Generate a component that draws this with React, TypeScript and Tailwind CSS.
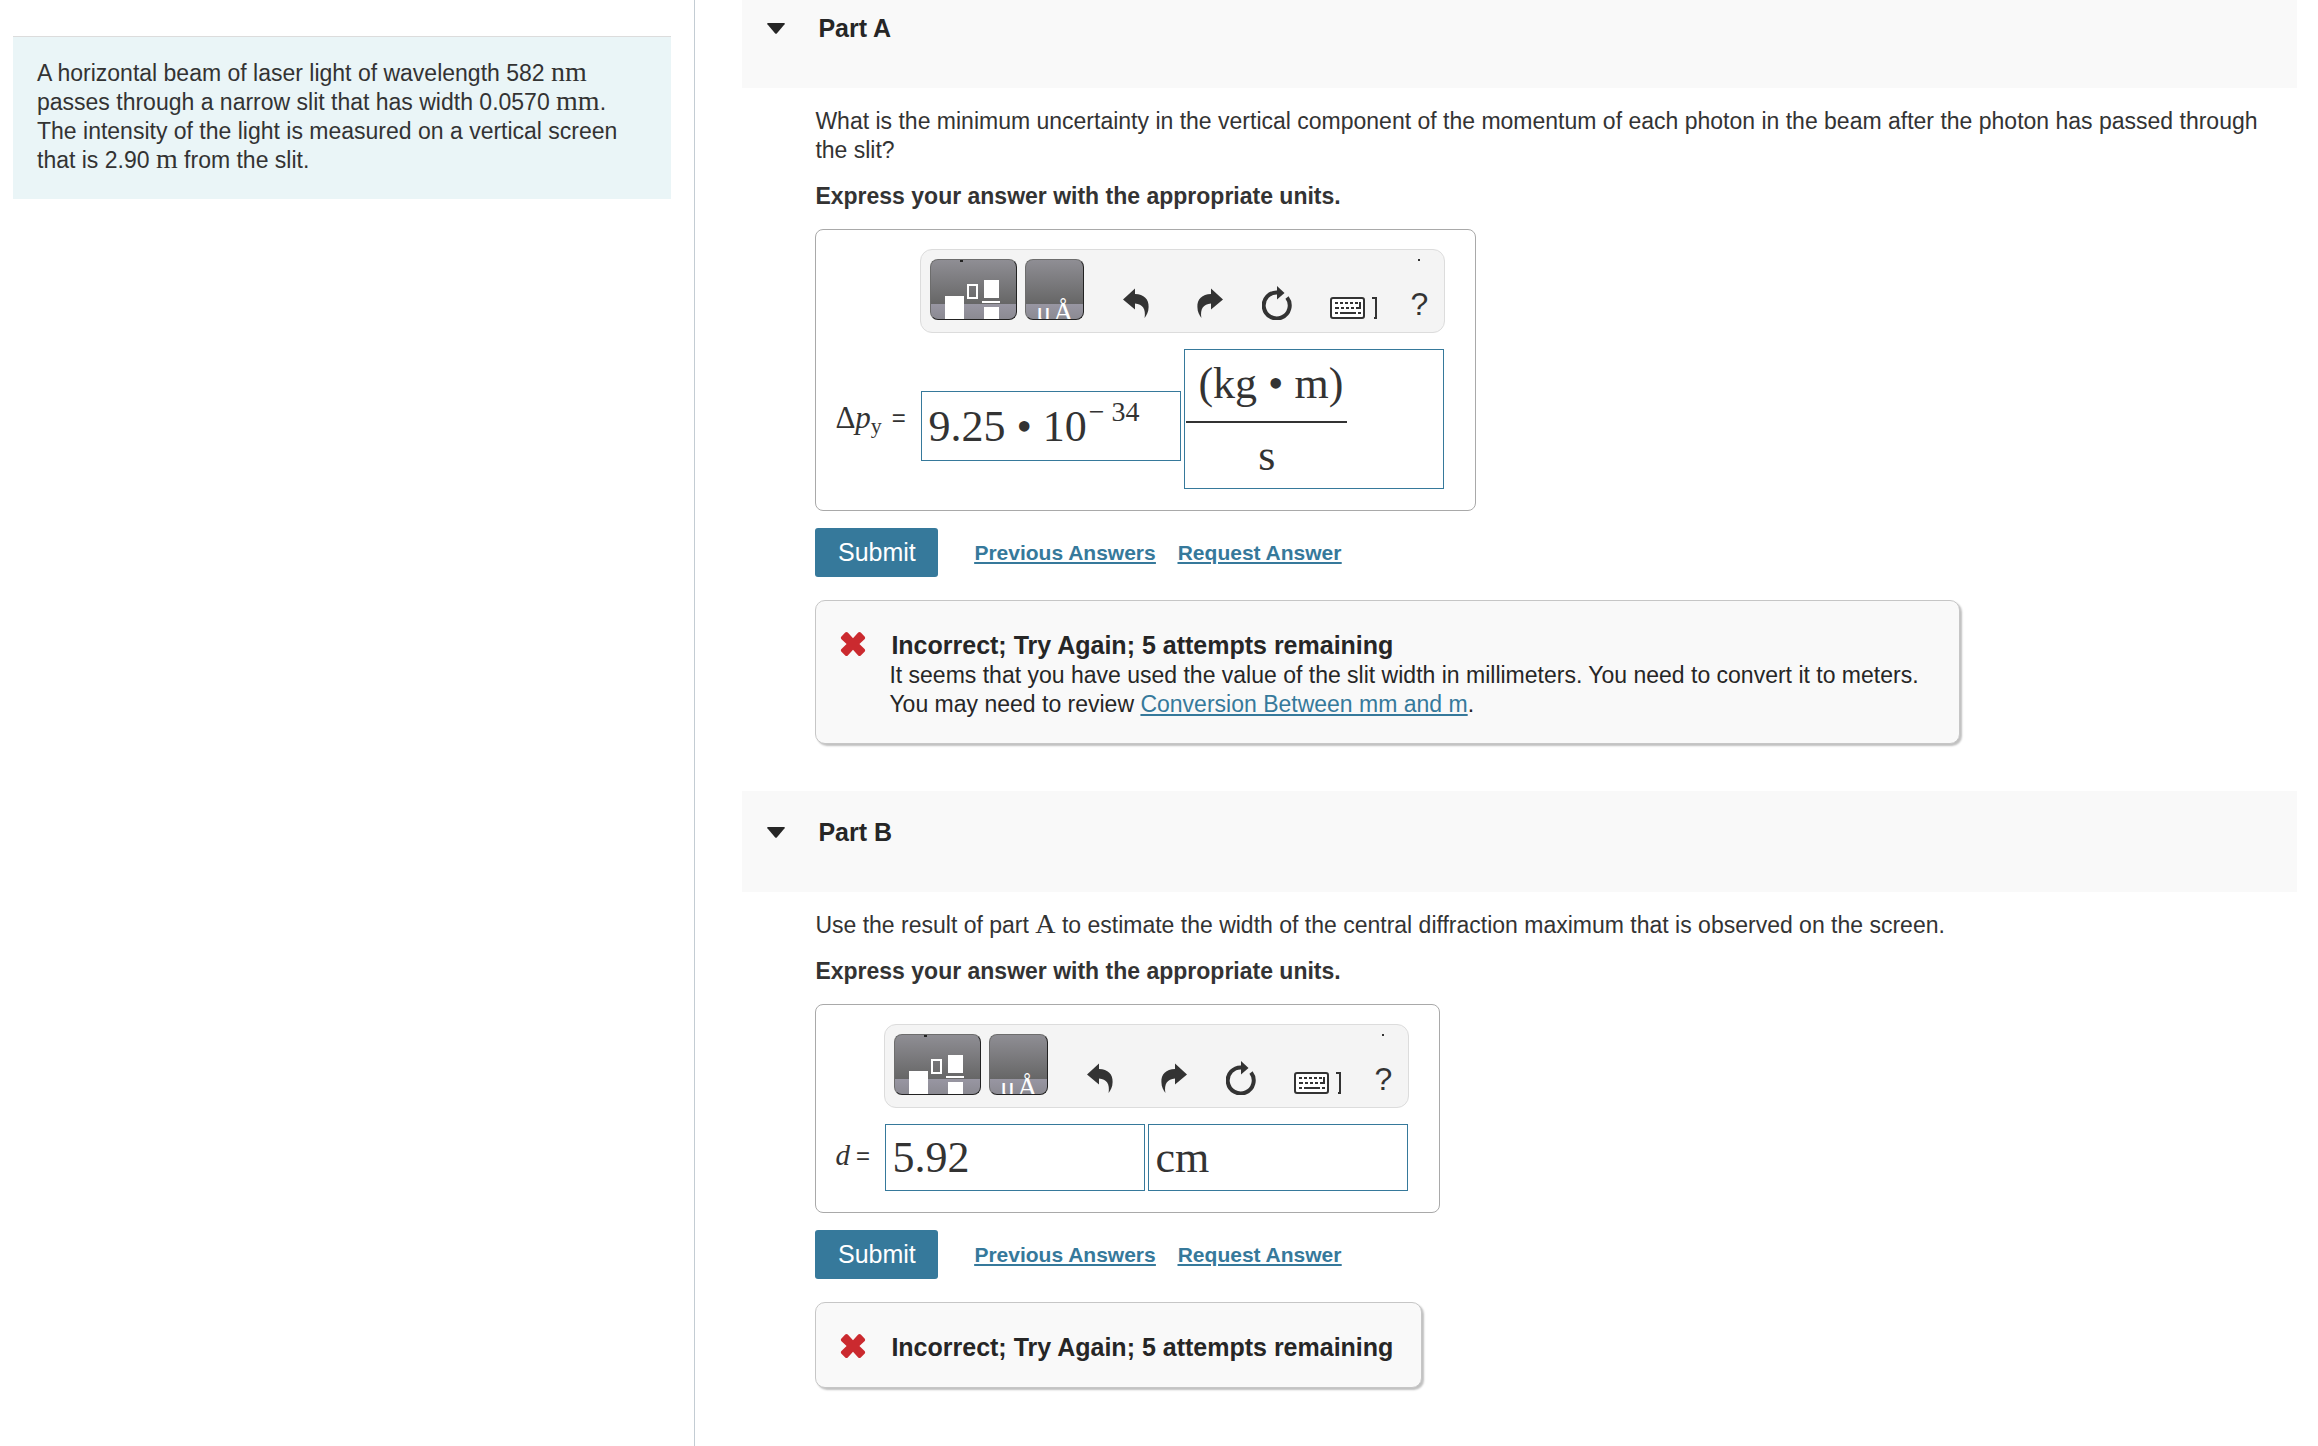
import React from "react";

type PartHeaderProps = {
  title: string;
  className: string;
};

const PartHeader = ({ title, className }: PartHeaderProps) => {
  return (
    <header className={`bg-[#f9f9f9] pl-6 ${className}`}>
      <button className="flex items-center gap-8 cursor-pointer text-[#262626] font-bold text-[25px] leading-8">
        <svg width="20" height="12" viewBox="0 0 20 12" aria-hidden="true">
          <path
            d="M2 1h16q1.500 0 .6 1.200l-7.600 9q-1 1-2 0L1.400 2.200Q.5 1 2 1z"
            fill="currentColor"
          />
        </svg>
        {title}
      </button>
    </header>
  );
};

const TemplatesIcon = () => (
  <svg width="85" height="59" viewBox="0 0 85 59" aria-hidden="true">
    <rect x="29" y="0" width="3" height="2" fill="#222" />
    <rect x="14" y="36" width="19" height="23" fill="#fff" />
    <rect x="37" y="25" width="9" height="13" fill="none" stroke="#fff" strokeWidth="2" />
    <rect x="53" y="20" width="15" height="18" fill="#fff" />
    <rect x="51" y="41" width="18" height="2" fill="#fff" />
    <rect x="53" y="47" width="15" height="12" fill="#fff" />
  </svg>
);

const UndoIcon = ({ className = "" }: { className?: string }) => (
  <svg width="26" height="34" viewBox="0 0 26 34" className={className} aria-hidden="true">
    <path
      d="M0 13.500 12 2.500V8C21 8.500 26 13 25.600 21c0 5-2 8-4 11 1.500-9-2-14-9.600-14.500v6z"
      fill="#333"
    />
  </svg>
);

const ResetIcon = () => (
  <svg width="30" height="34" viewBox="0 0 30 34" aria-hidden="true">
    <path d="M25 11.500A13 13 0 1 1 16 6.500" fill="none" stroke="#333" strokeWidth="4" />
    <path d="M15 0 22.500 7 15 13.500z" fill="#333" />
  </svg>
);

const KeyboardIcon = () => (
  <svg width="48" height="34" viewBox="0 0 48 34" aria-hidden="true">
    <rect x="1" y="12" width="33" height="20" rx="2" fill="#fff" stroke="#333" strokeWidth="2" />
    <path
      d="M5 17h3m2 0h3m2 0h3m2 0h3m2 0h3M5 22h4m2 0h3m2 0h3m2 0h3m2 0h5M5 27h3m2 0h16m2 0h3"
      stroke="#333"
      strokeWidth="2"
    />
    <path d="M30 16v7" stroke="#333" strokeWidth="2" />
    <path d="M42 12h4v20h-2" fill="none" stroke="#333" strokeWidth="2" />
  </svg>
);

const darkButton =
  "h-[61px] rounded-lg border border-[#6d6d6d] border-b-[#222] border-r-[#222] overflow-hidden cursor-pointer bg-[linear-gradient(180deg,#8f8e94_0%,#666_75%,#9896a2_75%,#8b8a92_100%)]";

const Toolbar = () => {
  return (
    <div className="flex items-end w-fit bg-[#f4f4f4] border border-[#dcdcdc] rounded-xl pt-[9px] pb-3 pl-[9px] pr-4">
      <button className={`w-[87px] ${darkButton}`} aria-label="Templates">
        <TemplatesIcon />
      </button>
      <button className={`w-[59px] ml-2 ${darkButton}`} aria-label="Symbols">
        <span className="flex items-start justify-end gap-[2px] pr-[10px] pt-9 h-full font-['Liberation_Serif',serif] text-white text-[28px] leading-8">
          <span>μ</span>
          <span>Å</span>
        </span>
      </button>
      <button className="ml-[39px] cursor-pointer" aria-label="Undo">
        <UndoIcon />
      </button>
      <button className="ml-12 cursor-pointer" aria-label="Redo">
        <UndoIcon className="-scale-x-100" />
      </button>
      <button className="ml-[39px] cursor-pointer" aria-label="Reset">
        <ResetIcon />
      </button>
      <button className="ml-[38px] cursor-pointer" aria-label="Keyboard shortcuts">
        <KeyboardIcon />
      </button>
      <button
        className="ml-8 self-stretch flex flex-col items-center justify-between cursor-pointer text-[#333] text-[32px] leading-8"
        aria-label="Help"
      >
        <span className="w-[2px] h-[2px] bg-[#333]" />
        <span>?</span>
      </button>
    </div>
  );
};

type AnswerBoxProps = {
  label: React.ReactNode;
  labelClass: string;
  children: React.ReactNode;
};

const AnswerBox = ({ label, labelClass, children }: AnswerBoxProps) => {
  return (
    <div className="grid grid-cols-[auto_auto] gap-y-4 w-fit mt-[18px] border border-[#a9a9a9] rounded-lg pl-[19px] pr-[30px] pt-[19px] pb-[21px]">
      <div className="col-start-2">
        <Toolbar />
      </div>
      <div
        className={`flex items-center pb-1 text-[#333] font-['Liberation_Serif',serif] ${labelClass}`}
      >
        {label}
      </div>
      <div className="flex items-center gap-[3px] pl-px text-[#333] font-['Liberation_Serif',serif] text-[44px]">
        {children}
      </div>
    </div>
  );
};

const Equals = () => (
  <span className="font-['Liberation_Sans',Arial,sans-serif] text-[24px]">=</span>
);

const Actions = () => {
  return (
    <div className="flex items-center mt-[17px]">
      <button className="bg-[#36799b] text-white rounded-[3px] w-[123px] h-[49px] text-[25px] cursor-pointer">
        Submit
      </button>
      <div className="flex gap-[22px] ml-9 text-[21px] font-bold text-[#36799b] underline decoration-2 underline-offset-2">
        <a href="#previous">Previous Answers</a>
        <a href="#request">Request Answer</a>
      </div>
    </div>
  );
};

const Feedback = ({ children }: { children?: React.ReactNode }) => {
  return (
    <div className="flex items-start w-fit mt-[23px] bg-[#f9f9f9] border border-[#c6c6c6] rounded-[10px] shadow-[2px_2px_2px_#c0c0c0] pl-6 pr-7 pt-7 pb-6 text-[#262626]">
      <svg width="26" height="26" viewBox="0 0 26 26" className="mt-[2px]" aria-hidden="true">
        <path
          d="M1.200 5.800 5.200 1.600q1.300-1 2.600 0L13 7.200l5.200-5.600q1.300-1 2.600 0l4 4.200q.8 1.200 0 2.200L19.400 13l5.400 5.200q.8 1.200 0 2.200l-4 4q-1.300 1-2.600 0L13 18.800l-5.200 5.600q-1.300 1-2.600 0l-4-4q-.8-1.200 0-2.200L6.600 13 1.200 8q-.8-1.200 0-2.200z"
          fill="#cb2a2f"
        />
      </svg>
      <div className="ml-[23px]">
        <h3 className="text-[25px] leading-8 font-bold pl-[2px]">
          Incorrect; Try Again; 5 attempts remaining
        </h3>
        {children}
      </div>
    </div>
  );
};

const Unit = ({ children }: { children: React.ReactNode }) => (
  <span className="font-['Liberation_Serif',serif] text-[28px] leading-[0px]">{children}</span>
);

const App = () => {
  return (
    <div className="flex min-h-screen bg-white text-[#333] font-['Liberation_Sans',Arial,sans-serif] text-[23px] leading-[29px]">
      <aside className="w-[30%] shrink-0 border-r border-[#c3ccd3] pl-[13px] pr-[23px] pt-9">
        <p className="bg-[#eaf5f7] border-t border-[#dcdcdc] px-6 pt-[22px] pb-6">
          A horizontal beam of laser light of wavelength 582 <Unit>nm</Unit> passes through a
          narrow slit that has width 0.0570 <Unit>mm</Unit>. The intensity of the light is
          measured on a vertical screen that is 2.90 <Unit>m</Unit> from the slit.
        </p>
      </aside>

      <main className="flex-1 pl-[47px] pr-[21px]">
        <section>
          <PartHeader title="Part A" className="pt-3 pb-11" />
          <div className="pl-[73px] pr-4 pt-[19px]">
            <p>
              What is the minimum uncertainty in the vertical component of the momentum of each
              photon in the beam after the photon has passed through the slit?
            </p>
            <p className="font-bold mt-[17px]">Express your answer with the appropriate units.</p>

            <AnswerBox
              labelClass="w-[85px] text-[31px] gap-[10px]"
              label={
                <>
                  <span>
                    Δ<i>p</i>
                    <sub className="text-[22px]">y</sub>
                  </span>
                  <Equals />
                </>
              }
            >
              <div
                role="textbox"
                aria-label="Value of the momentum uncertainty"
                tabIndex={0}
                className="w-[260px] h-[70px] mt-[14px] pl-[6px] border border-[#36799b] leading-[70px] whitespace-nowrap"
              >
                9.25 • 10<sup className="static align-[20px] text-[28px] ml-[2px]">− 34</sup>
              </div>
              <div
                role="textbox"
                aria-label="Units of the momentum uncertainty"
                tabIndex={0}
                className="w-[260px] h-[140px] pl-px border border-[#36799b]"
              >
                <div className="w-fit text-center">
                  <div className="h-[73px] pl-3 pr-1 pt-[9px] leading-[50px] border-b-2 border-[#333] whitespace-nowrap">
                    (kg • m)
                  </div>
                  <div className="pt-2 leading-[50px]">s</div>
                </div>
              </div>
            </AnswerBox>

            <Actions />
            <Feedback>
              <p className="pr-3">
                It seems that you have used the value of the slit width in millimeters. You need to
                convert it to meters.
                <br />
                You may need to review{" "}
                <a
                  href="#conversion"
                  className="text-[#36799b] underline decoration-2 underline-offset-2"
                >
                  Conversion Between mm and m
                </a>
                .
              </p>
            </Feedback>
          </div>
        </section>

        <section className="mt-[47px]">
          <PartHeader title="Part B" className="pt-[25px] pb-11" />
          <div className="pl-[73px] pr-4 pt-[19px]">
            <p>
              Use the result of part <Unit>A</Unit> to estimate the width of the central
              diffraction maximum that is observed on the screen.
            </p>
            <p className="font-bold mt-[17px]">Express your answer with the appropriate units.</p>

            <AnswerBox
              labelClass="w-[49px] text-[29px] gap-[6px]"
              label={
                <>
                  <i>d</i>
                  <Equals />
                </>
              }
            >
              <input
                aria-label="Value of the width"
                defaultValue="5.92"
                className="w-[260px] h-[67px] px-[6px] border border-[#36799b]"
              />
              <input
                aria-label="Units of the width"
                defaultValue="cm"
                className="w-[260px] h-[67px] px-[6px] border border-[#36799b]"
              />
            </AnswerBox>

            <Actions />
            <Feedback />
          </div>
        </section>
      </main>
    </div>
  );
};

export default App;
